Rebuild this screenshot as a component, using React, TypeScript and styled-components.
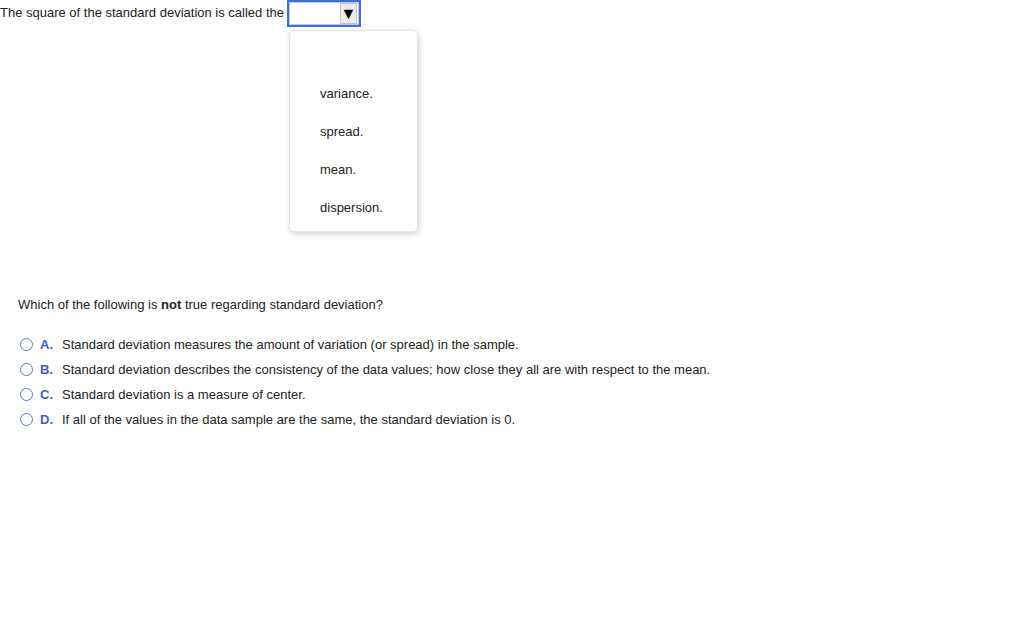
import React from 'react';
import styled, { createGlobalStyle } from 'styled-components';

const GlobalStyle = createGlobalStyle`
  html, body {
    margin: 0;
    padding: 0;
    background: #ffffff;
  }
  body {
    font-family: "Liberation Sans", Arial, sans-serif;
    font-size: 13px;
    color: #222222;
  }
`;

const Page = styled.div`
  width: 1015px;
  height: 626px;
  position: relative;
`;

const PromptRow = styled.div`
  display: flex;
  align-items: flex-start;
  height: 28px;
`;

const PromptText = styled.span`
  font-size: 13px;
  line-height: 26px;
  margin-right: 3px;
`;

const SelectWrap = styled.div`
  position: relative;
  width: 74px;
  height: 27px;
`;

const SelectBox = styled.div`
  box-sizing: border-box;
  width: 74px;
  height: 27px;
  border: 2px solid #3d6fd9;
  box-shadow: inset 0 0 0 1px #b9c9ef;
  background: #fff;
  display: flex;
  justify-content: flex-end;
  align-items: center;
  padding-right: 2px;
`;

const ArrowButton = styled.div`
  box-sizing: border-box;
  width: 17px;
  height: 21px;
  background: #ececec;
  border: 1px solid #c4c4c4;
  display: flex;
  align-items: center;
  justify-content: center;
  font-size: 16px;
  color: #000;
  line-height: 1;
`;

const Menu = styled.ul`
  position: absolute;
  top: 30px;
  left: 2px;
  box-sizing: border-box;
  width: 129px;
  height: 202px;
  margin: 0;
  padding: 55px 0 0 30px;
  list-style: none;
  background: #fff;
  border: 1px solid #e4e4e4;
  border-radius: 5px;
  box-shadow: 1px 2px 6px rgba(0, 0, 0, 0.18);
`;

const MenuItem = styled.li`
  height: 38px;
  line-height: 15px;
  font-size: 13px;
  color: #222;
`;

const Question = styled.section`
  padding: 268px 0 0 18px;
`;

const QuestionText = styled.p`
  margin: 0 0 23px;
  font-size: 13px;
  line-height: 17px;
`;

const Options = styled.div`
  display: flex;
  flex-direction: column;
  gap: 9px;
`;

const OptionRow = styled.label`
  display: flex;
  align-items: center;
  height: 16px;
  font-size: 13px;
`;

const Radio = styled.span`
  box-sizing: border-box;
  width: 13px;
  height: 13px;
  margin-left: 2px;
  border: 1.5px solid #4f7fd2;
  border-radius: 50%;
  flex-shrink: 0;
`;

const Letter = styled.span`
  width: 22px;
  margin-left: 7px;
  color: #3c5fc4;
  font-weight: bold;
`;

const options = [
  { letter: 'A.', text: 'Standard deviation measures the amount of variation (or spread) in the sample.' },
  { letter: 'B.', text: 'Standard deviation describes the consistency of the data values; how close they all are with respect to the mean.' },
  { letter: 'C.', text: 'Standard deviation is a measure of center.' },
  { letter: 'D.', text: 'If all of the values in the data sample are the same, the standard deviation is 0.' },
];

const menuItems = ['variance.', 'spread.', 'mean.', 'dispersion.'];

export default function App() {
  return (
    <Page>
      <GlobalStyle />
      <PromptRow>
        <PromptText>The square of the standard deviation is called the</PromptText>
        <SelectWrap>
          <SelectBox>
            <ArrowButton>▼</ArrowButton>
          </SelectBox>
          <Menu>
            {menuItems.map((m) => (
              <MenuItem key={m}>{m}</MenuItem>
            ))}
          </Menu>
        </SelectWrap>
      </PromptRow>
      <Question>
        <QuestionText>
          Which of the following is <b>not</b> true regarding standard deviation?
        </QuestionText>
        <Options>
          {options.map((o) => (
            <OptionRow key={o.letter}>
              <Radio />
              <Letter>{o.letter}</Letter>
              <span>{o.text}</span>
            </OptionRow>
          ))}
        </Options>
      </Question>
    </Page>
  );
}
